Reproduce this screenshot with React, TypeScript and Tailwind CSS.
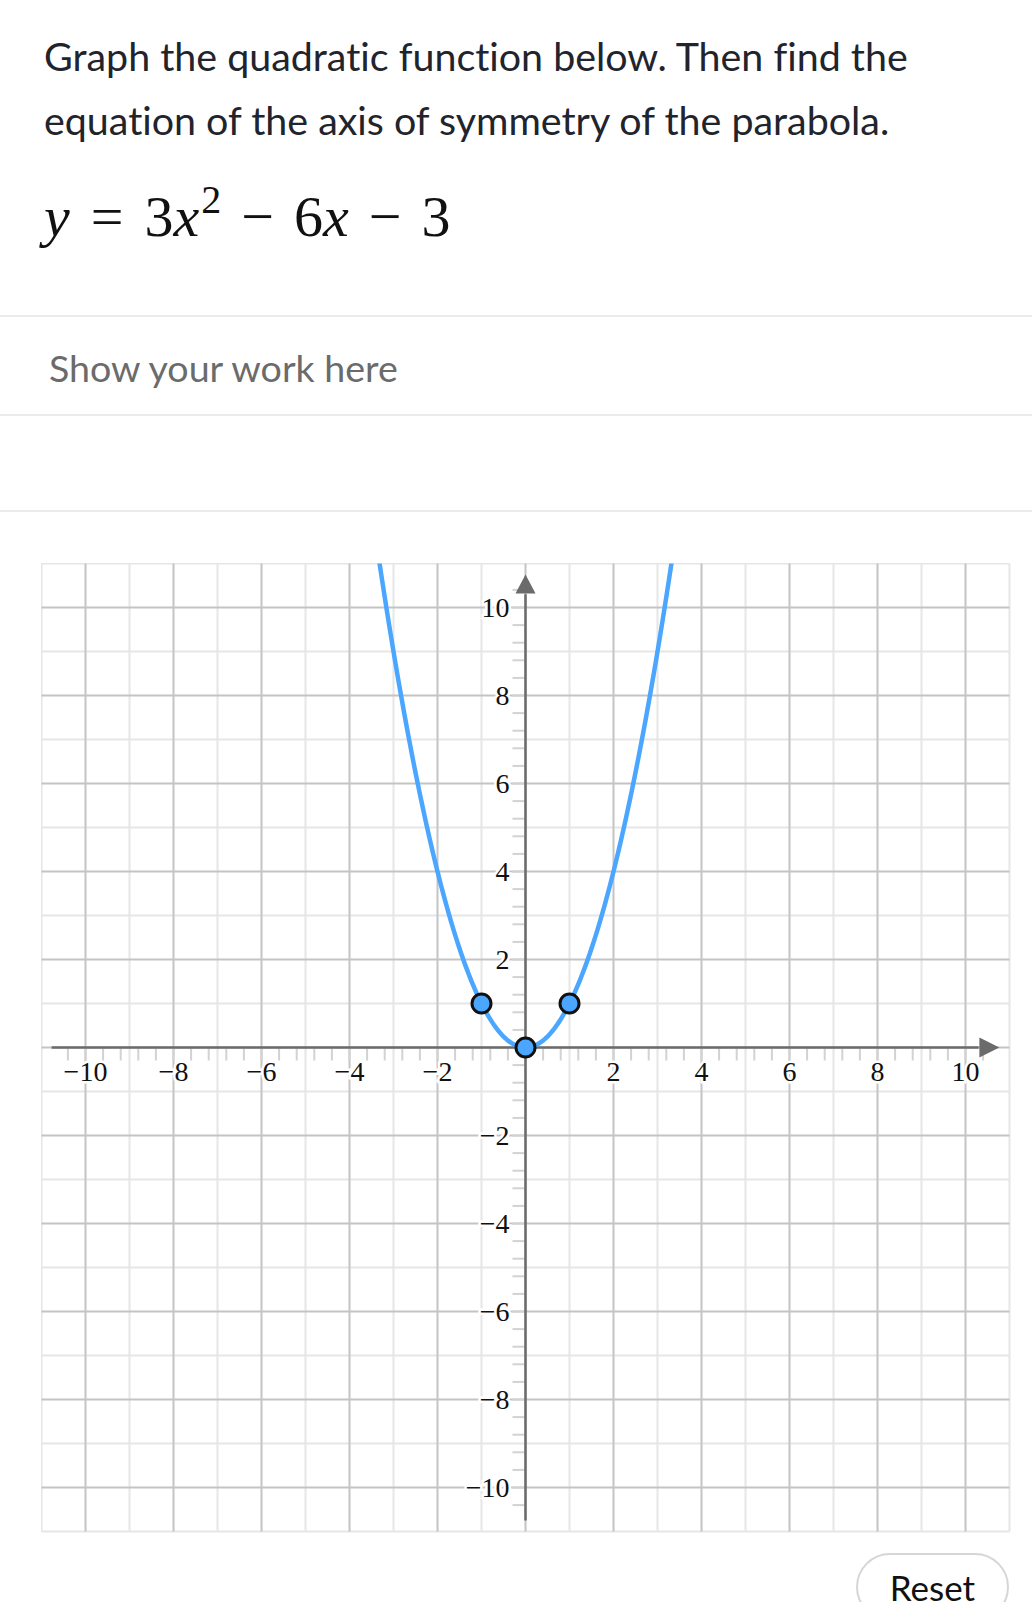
import React from "react";

const U = 44;
const O = 484.5;
const X = (u: number) => O + u * U;
const Y = (v: number) => O - v * U;

function Graph() {
  const lines: React.ReactElement[] = [];
  for (let i = -11; i <= 11; i++) {
    const major = i % 2 === 0 && Math.abs(i) !== 11;
    if (major) continue;
    lines.push(
      <line key={"vx" + i} x1={X(i)} y1={Y(11)} x2={X(i)} y2={Y(-11)} stroke="#e6e6e6" strokeWidth={2} />
    );
    lines.push(
      <line key={"hy" + i} x1={X(-11)} y1={Y(i)} x2={X(11)} y2={Y(i)} stroke="#e6e6e6" strokeWidth={2} />
    );
  }
  const majors: React.ReactElement[] = [];
  for (let i = -10; i <= 10; i += 2) {
    majors.push(
      <line key={"mvx" + i} x1={X(i)} y1={Y(11)} x2={X(i)} y2={Y(-11)} stroke="#c4c4c4" strokeWidth={2} />
    );
    majors.push(
      <line key={"mhy" + i} x1={X(-11)} y1={Y(i)} x2={X(11)} y2={Y(i)} stroke="#c4c4c4" strokeWidth={2} />
    );
  }
  const ticks: React.ReactElement[] = [];
  for (let k = -26; k <= 26; k++) {
    const u = k * 0.4;
    ticks.push(
      <line key={"tx" + k} x1={X(u)} y1={Y(0)} x2={X(u)} y2={Y(0) + 13} stroke="#d2d2d2" strokeWidth={2} />
    );
    ticks.push(
      <line key={"ty" + k} x1={X(0) - 13} y1={Y(u)} x2={X(0)} y2={Y(u)} stroke="#d2d2d2" strokeWidth={2} />
    );
  }
  const pts: string[] = [];
  for (let i = 0; i <= 200; i++) {
    const u = -3.4 + (6.8 * i) / 200;
    pts.push(`${i === 0 ? "M" : "L"}${X(u).toFixed(2)},${Y(u * u).toFixed(2)}`);
  }
  const labelVals = [-10, -8, -6, -4, -2, 2, 4, 6, 8, 10];
  const fmt = (v: number) => (v < 0 ? "\u2212" + Math.abs(v) : String(v));
  const labelStyle = {
    fontFamily: '"Liberation Serif", "Times New Roman", serif',
    fontSize: 28,
  } as const;
  return (
    <svg width={970} height={970} viewBox="0 0 970 970" className="block">
      <defs>
        <clipPath id="gclip">
          <rect x={X(-11)} y={Y(11)} width={22 * U} height={22 * U} />
        </clipPath>
      </defs>
      <rect x={X(-11)} y={Y(11)} width={22 * U} height={22 * U} fill="#ffffff" />
      {lines}
      {majors}
      {ticks}
      <line x1={X(-10.77)} y1={Y(0)} x2={X(10.3)} y2={Y(0)} stroke="#6b6b6b" strokeWidth={2.5} />
      <polygon
        points={`${X(10.77)},${Y(0)} ${X(10.77) - 20},${Y(0) - 10} ${X(10.77) - 20},${Y(0) + 10}`}
        fill="#6b6b6b"
      />
      <line x1={X(0)} y1={Y(-10.75)} x2={X(0)} y2={Y(10.3)} stroke="#6b6b6b" strokeWidth={2.5} />
      <polygon
        points={`${X(0)},${Y(10.75)} ${X(0) - 10},${Y(10.75) + 19} ${X(0) + 10},${Y(10.75) + 19}`}
        fill="#6b6b6b"
      />
      {labelVals.map((v) => (
        <text
          key={"lx" + v}
          x={X(v)}
          y={Y(0) + 33}
          textAnchor="middle"
          fill="#111111"
          stroke="#ffffff"
          strokeWidth={5}
          paintOrder="stroke"
          style={labelStyle}
        >
          {fmt(v)}
        </text>
      ))}
      {labelVals.map((v) => (
        <text
          key={"ly" + v}
          x={X(0) - 16}
          y={Y(v) + 9}
          textAnchor="end"
          fill="#111111"
          stroke="#ffffff"
          strokeWidth={5}
          paintOrder="stroke"
          style={labelStyle}
        >
          {fmt(v)}
        </text>
      ))}
      <path d={pts.join(" ")} fill="none" stroke="#4ba6ff" strokeWidth={4.5} clipPath="url(#gclip)" />
      {[
        [-1, 1],
        [0, 0],
        [1, 1],
      ].map(([a, b]) => (
        <circle key={a + "," + b} cx={X(a)} cy={Y(b)} r={9.5} fill="#4ba6ff" stroke="#111111" strokeWidth={3} />
      ))}
    </svg>
  );
}

export default function App() {
  const lato = { fontFamily: 'Lato, "Noto Sans", sans-serif' };
  const serif = { fontFamily: '"Liberation Serif", "Times New Roman", serif' };
  return (
    <div className="w-[1032px] bg-white">
      <div
        className="pl-[44px] pt-[24px] text-[39.4px] leading-[63.5px] text-[#21242c] whitespace-nowrap [font-variant-ligatures:none]"
        style={lato}
      >
        Graph the quadratic function below. Then find the
        <br />
        equation of the axis of symmetry of the parabola.
      </div>
      <div className="h-[164px] pl-[44px] pt-[35px]">
        <div className="flex items-baseline text-[58px] leading-[61px] text-[#111]" style={serif}>
          <span className="italic">y</span>
          <span className="ml-[21px] mr-[21px]">=</span>
          <span>3</span>
          <span className="italic">x</span>
          <span className="relative -top-[23px] text-[40px] leading-none ml-[2px]">2</span>
          <span className="ml-[20px] mr-[20px]">−</span>
          <span>6</span>
          <span className="italic">x</span>
          <span className="ml-[20px] mr-[20px]">−</span>
          <span>3</span>
        </div>
      </div>
      <div className="h-[2px] bg-[#ebebeb]" />
      <div className="h-[97px] pt-[6px] pl-[49px] flex items-center">
        <span className="text-[37.6px] text-[#6b6b6b] [font-variant-ligatures:none]" style={lato}>
          Show your work here
        </span>
      </div>
      <div className="h-[2px] bg-[#ebebeb]" />
      <div className="h-[94px]" />
      <div className="h-[2px] bg-[#ebebeb]" />
      <div className="h-[51px]" />
      <div className="pl-[41px]">
        <Graph />
      </div>
      <div className="mt-[20px] flex justify-end pr-[23px]">
        <div
          className="w-[153px] h-[68px] rounded-full border-2 border-[#d6d6d6] flex items-center justify-center text-[35px] text-[#111]"
          style={lato}
        >
          Reset
        </div>
      </div>
    </div>
  );
}
